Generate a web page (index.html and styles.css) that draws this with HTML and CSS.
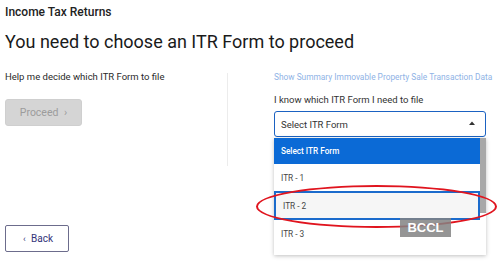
FILE: index.html
```html
<!DOCTYPE html>
<html>
<head>
<meta charset="utf-8">
<link rel="stylesheet" href="styles.css">
</head>
<body>
<div class="page">
  <div class="crumb">Income Tax Returns</div>
  <h1 class="title">You need to choose an ITR Form to proceed</h1>
  <div class="cols">
    <div class="col-left">
      <div class="help">Help me decide which ITR Form to file</div>
      <button class="proceed">Proceed <span class="chev">›</span></button>
    </div>
    <div class="divider"></div>
    <div class="col-right">
      <div class="link">Show Summary Immovable Property Sale Transaction Data</div>
      <div class="label">I know which ITR Form I need to file</div>
      <div class="select-wrap">
        <div class="select">
          <span>Select ITR Form</span>
          <svg class="caret" width="6" height="4" viewBox="0 0 6 4"><path d="M0 4 L3 0.5 L6 4 Z" fill="#333"/></svg>
        </div>
        <div class="list">
          <div class="opts">
            <div class="opt head">Select ITR Form</div>
            <div class="opt">ITR - 1</div>
            <div class="opt sel">ITR - 2</div>
            <div class="opt">ITR - 3</div>
          </div>
          <div class="scroll"><div class="thumb"></div></div>
        </div>
      </div>
    </div>
  </div>
  <button class="back"><span class="bchev">‹</span> Back</button>
</div>
<div class="ring"></div>
<div class="mark">BCCL</div>
</body>
</html>
```
FILE: styles.css
```css
html, body { margin: 0; padding: 0; background: #fff; }
body { font-family: Roboto, "Noto Sans", Arial, sans-serif; color: #1f1f1f; width: 502px; height: 268px; overflow: hidden; position: relative; }
.page { padding: 4px 0 0 5px; }
.crumb { font-size: 12px; line-height: 16px; color: #222; font-weight: 500; }
.title { font-size: 18px; font-weight: 400; margin: 11px 0 0; line-height: 22px; color: #1a1a1a; }
.cols { display: flex; margin-top: 18px; }
.col-left { width: 222px; flex-shrink: 0; }
.divider { width: 1px; background: #ececec; height: 93px; margin-top: 2px; flex-shrink: 0; }
.help { font-size: 9.5px; line-height: 12px; color: #2a2a2a; }
.proceed { display: block; margin-top: 16px; width: 77px; height: 27px; background: #d5d5d5; border: 1px solid #cfcfcf; border-radius: 3px; color: #9c9c9c; font-family: inherit; font-size: 10.5px; padding: 0; }
.chev { margin-left: 3px; }
.col-right { padding-left: 46px; flex: 1; min-width: 0; }
.link { font-size: 8.35px; line-height: 12px; color: #8fb3e6; white-space: nowrap; }
.label { font-size: 9.5px; line-height: 12px; color: #333; margin-top: 11px; }
.select-wrap { position: relative; margin-top: 5px; width: 212px; }
.select { height: 26px; box-sizing: border-box; border: 1px solid #1b62c2; border-radius: 3px; display: flex; align-items: center; justify-content: space-between; padding: 0 10px 0 6px; font-size: 9.5px; color: #333; }
.caret { margin-top: -3px; }
.list { position: absolute; left: 0; top: 27px; width: 212px; height: 117px; background: #fff; box-shadow: 0 1px 4px rgba(0,0,0,0.25); display: flex; }
.opts { flex: 1; }
.opt { height: 28px; display: flex; align-items: center; padding-left: 7px; font-size: 8.3px; color: #444; box-sizing: border-box; }
.opt.head { height: 26px; background: #0b6ad6; color: #fff; font-weight: 500; font-size: 8.2px; }
.opt:nth-child(2) { height: 27px; }
.opt.sel { height: 29px; border: 2px solid #1b6bcc; background: #f6f6f6; padding-left: 7px; }
.scroll { width: 6px; }
.thumb { height: 75px; background: #a8a8a8; }
.back { position: absolute; left: 5px; top: 225px; width: 64px; height: 27px; background: #fff; border: 1px solid #6c6c8c; border-radius: 2px; color: #34347a; font-family: inherit; font-size: 10px; padding: 0 0 0 2px; }
.bchev { margin-right: 3px; font-size: 9px; }
.ring { position: absolute; left: 256px; top: 185px; width: 237px; height: 39px; border: 2px solid #e0141e; border-radius: 50%; }
.mark { position: absolute; left: 400px; top: 218px; width: 51px; height: 19px; background: rgba(130,130,130,0.85); color: #fff; font-weight: 700; font-size: 13px; line-height: 19px; text-align: center; font-family: "Liberation Sans", Arial, sans-serif; }
```
